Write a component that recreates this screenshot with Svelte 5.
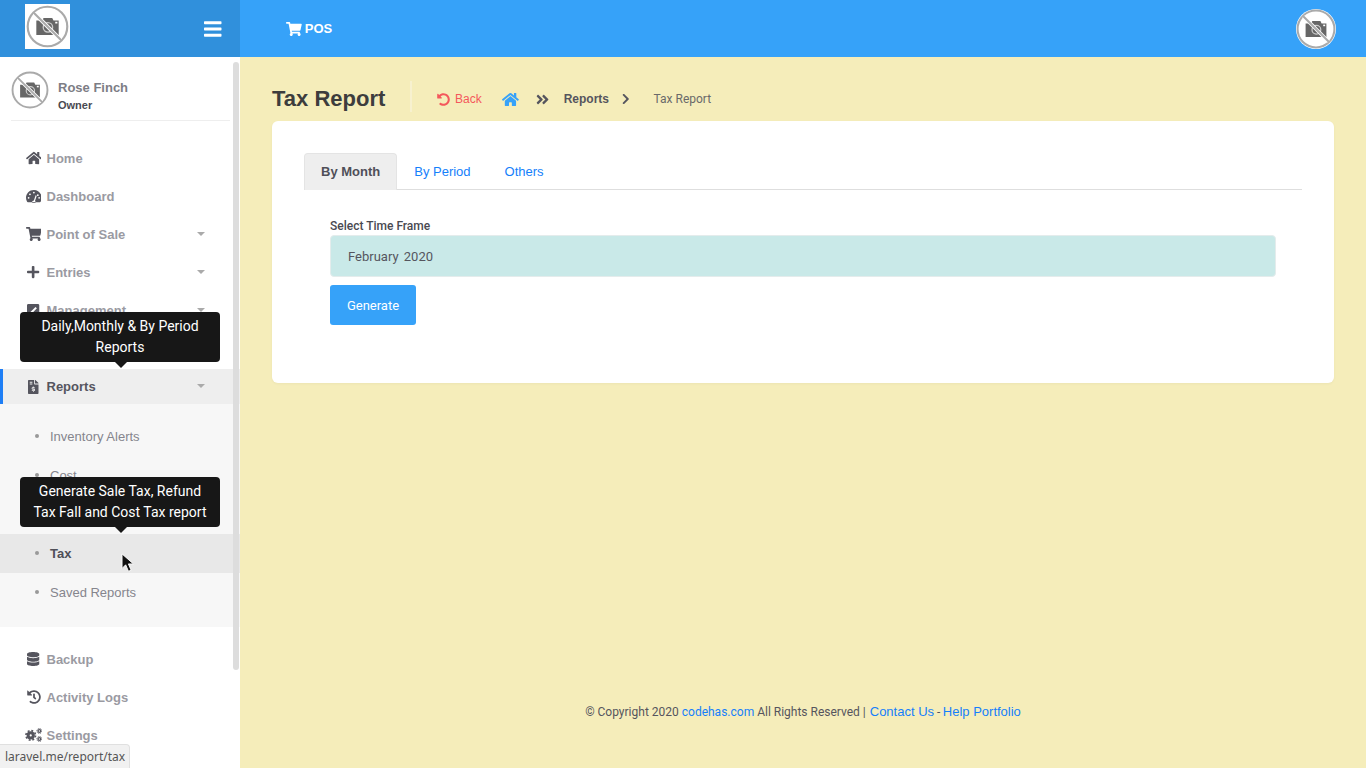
<script>
  const icons = {
    home: ['0 0 576 512', 'M280.37 148.26L96 300.11V464a16 16 0 0 0 16 16l112.06-.29a16 16 0 0 0 15.92-16V368a16 16 0 0 1 16-16h64a16 16 0 0 1 16 16v95.64a16 16 0 0 0 16 16.05L464 480a16 16 0 0 0 16-16V300L295.67 148.26a12.19 12.19 0 0 0-15.3 0zM571.6 251.47L488 182.56V44.05a12 12 0 0 0-12-12h-56a12 12 0 0 0-12 12v72.61L318.47 43a48 48 0 0 0-61 0L4.34 251.47a12 12 0 0 0-1.6 16.9l25.5 31A12 12 0 0 0 45.15 301l235.22-193.74a12.19 12.19 0 0 1 15.3 0L530.9 301a12 12 0 0 0 16.9-1.6l25.5-31a12 12 0 0 0-1.7-16.93z'],
    cart: ['0 0 576 512', 'M528.12 301.319l47.273-208C578.806 78.301 567.391 64 551.99 64H159.208l-9.166-44.81C147.758 8.021 137.93 0 126.529 0H24C10.745 0 0 10.745 0 24v16c0 13.255 10.745 24 24 24h69.883l70.248 343.435C147.325 417.1 136 435.222 136 456c0 30.928 25.072 56 56 56s56-25.072 56-56c0-15.674-6.447-29.835-16.824-40h209.647C430.447 426.165 424 440.326 424 456c0 30.928 25.072 56 56 56s56-25.072 56-56c0-22.172-12.888-41.332-31.579-50.405l5.517-24.276c3.413-15.018-8.002-29.319-23.403-29.319H218.117l-6.545-32h293.145c11.206 0 20.92-7.754 23.403-18.681z'],
    bars: ['0 0 448 512', 'M16 132h416c8.837 0 16-7.163 16-16V76c0-8.837-7.163-16-16-16H16C7.163 60 0 67.163 0 76v40c0 8.837 7.163 16 16 16zm0 160h416c8.837 0 16-7.163 16-16v-40c0-8.837-7.163-16-16-16H16c-8.837 0-16 7.163-16 16v40c0 8.837 7.163 16 16 16zm0 160h416c8.837 0 16-7.163 16-16v-40c0-8.837-7.163-16-16-16H16c-8.837 0-16 7.163-16 16v40c0 8.837 7.163 16 16 16z'],
    plus: ['0 0 448 512', 'M416 208H272V64c0-17.67-14.33-32-32-32h-32c-17.67 0-32 14.33-32 32v144H32c-17.67 0-32 14.33-32 32v32c0 17.67 14.33 32 32 32h144v144c0 17.67 14.33 32 32 32h32c17.67 0 32-14.33 32-32V304h144c17.67 0 32-14.33 32-32v-32c0-17.67-14.33-32-32-32z'],
    chevron: ['0 0 320 512', 'M285.476 272.971L91.132 467.314c-9.373 9.373-24.569 9.373-33.941 0l-22.667-22.667c-9.357-9.357-9.375-24.522-.04-33.901L188.505 256 34.484 101.255c-9.335-9.379-9.317-24.544.04-33.901l22.667-22.667c9.373-9.373 24.569-9.373 33.941 0L285.475 239.03c9.373 9.372 9.373 24.568.001 33.941z'],
    double: ['0 0 448 512', 'M224.3 273l-136 136c-9.4 9.4-24.6 9.4-33.9 0l-22.6-22.6c-9.4-9.4-9.4-24.6 0-33.9l96.4-96.4-96.4-96.4c-9.4-9.4-9.4-24.6 0-33.9L54.3 103c9.4-9.4 24.6-9.4 33.9 0l136 136c9.5 9.4 9.5 24.6.1 34zm192-34l-136-136c-9.4-9.4-24.6-9.4-33.9 0l-22.6 22.6c-9.4 9.4-9.4 24.6 0 33.9l96.4 96.4-96.4 96.4c-9.4 9.4-9.4 24.6 0 33.9l22.6 22.6c9.4 9.4 24.6 9.4 33.9 0l136-136c9.4-9.2 9.4-24.4 0-33.8z'],
    undo: ['0 0 512 512', 'M255.545 8c-66.269.119-126.438 26.233-170.86 68.685L48.971 40.971C33.851 25.851 8 36.559 8 57.941V192c0 13.255 10.745 24 24 24h134.059c21.382 0 32.09-25.851 16.971-40.971l-41.75-41.75c30.864-28.899 70.801-44.907 113.23-45.273 92.398-.798 170.283 73.977 169.484 169.442C423.236 348.009 349.816 424 256 424c-41.127 0-79.997-14.678-110.63-41.556-4.743-4.161-11.906-3.908-16.368.553L89.34 422.659c-4.872 4.872-4.631 12.815.482 17.433C133.798 479.813 192.074 504 256 504c136.966 0 247.999-111.033 248-247.998C504.001 119.193 392.354 7.755 255.545 8z'],
    database: ['0 0 448 512', 'M448 73.143v45.714C448 159.143 347.667 192 224 192S0 159.143 0 118.857V73.143C0 32.857 100.333 0 224 0s224 32.857 224 73.143zM448 176v102.857C448 319.143 347.667 352 224 352S0 319.143 0 278.857V176c48.125 33.143 136.208 48.572 224 48.572S399.874 209.143 448 176zm0 160v102.857C448 479.143 347.667 512 224 512S0 479.143 0 438.857V336c48.125 33.143 136.208 48.572 224 48.572S399.874 369.143 448 336z'],
    history: ['0 0 512 512', 'M504 255.531c.253 136.64-111.18 248.372-247.82 248.468-59.015.042-113.223-20.53-155.822-54.911-11.077-8.94-11.905-25.541-1.839-35.607l11.267-11.267c8.609-8.609 22.353-9.551 31.891-1.984C173.062 425.135 212.781 440 256 440c101.705 0 184-82.311 184-184 0-101.705-82.311-184-184-184-48.814 0-93.149 18.969-126.068 49.932l50.754 50.754c10.08 10.08 2.941 27.314-11.313 27.314H24c-8.837 0-16-7.163-16-16V38.627c0-14.254 17.234-21.393 27.314-11.314l49.372 49.372C129.209 34.136 189.552 8 256 8c136.81 0 247.747 110.78 248 247.531zm-180.912 78.784l9.823-12.63c8.138-10.463 6.253-25.542-4.21-33.679L288 256.349V152c0-13.255-10.745-24-24-24h-16c-13.255 0-24 10.745-24 24v135.651l65.409 50.874c10.463 8.137 25.541 6.253 33.679-4.21z'],
    gauge: ['0 0 576 512', 'M288 32C129 32 0 161 0 320c0 53 14 102 40 145 6 9 16 15 27 15h442c11 0 21-6 27-15 26-43 40-92 40-145C576 161 447 32 288 32zm0 64a32 32 0 1 1 0 64 32 32 0 0 1 0-64zM96 352a32 32 0 1 1 0-64 32 32 0 0 1 0 64zm48-128a32 32 0 1 1 0-64 32 32 0 0 1 0 64zm246 30l-61 184c14 11 23 29 23 48 0 12-3 23-9 32H233c-6-9-9-20-9-32 0-35 29-64 64-64l61-183c3-9 13-14 22-11 9 3 14 13 11 22-1 0-1 3-1 4zm10-30a32 32 0 1 1 64 0 32 32 0 0 1-64 0zm80 128a32 32 0 1 1 0-64 32 32 0 0 1 0 64z'],
    pad: ['0 0 448 512', 'M48 32h352c26 0 48 22 48 48v352c0 26-22 48-48 48H48c-26 0-48-22-48-48V80c0-26 22-48 48-48zm262 110l-186 186-14 66 66-14 186-186-52-52z'],
    money: ['0 0 640 512', 'M608 32H32C14 32 0 46 0 64v384c0 18 14 32 32 32h576c18 0 32-14 32-32V64c0-18-14-32-32-32zM280 160h304v48H280v-48zm0 144h304v48H280v-48zM96 180h96v152H96V180z'],
    invoice: ['0 0 384 512', 'M377 105L279 7c-4.500-4.500-10.600-7-17-7h-6v128h128v-6c0-6.300-2.500-12.400-7-17zM224 136V0H24C10.700 0 0 10.700 0 24v464c0 13.300 10.700 24 24 24h336c13.300 0 24-10.700 24-24V160H248c-13.200 0-24-10.800-24-24zM64 72c0-4.400 3.600-8 8-8h80c4.400 0 8 3.600 8 8v16c0 4.400-3.600 8-8 8H72c-4.400 0-8-3.600-8-8V72zm0 64c0-4.400 3.600-8 8-8h80c4.400 0 8 3.600 8 8v16c0 4.400-3.600 8-8 8H72c-4.400 0-8-3.600-8-8v-16zM176 240h32v28h36v32h-76c-6 0-10 4-10 10s4 10 10 10h48c24 0 42 18 42 42s-18 42-42 42v28h-32v-28h-44v-32h76c6 0 10-4 10-10s-4-10-10-10h-40c-24 0-42-18-42-42s18-42 42-42v-28z']
  };

  const topItems = [
    { label: 'Home', icon: 'home' },
    { label: 'Dashboard', icon: 'gauge' },
    { label: 'Point of Sale', icon: 'cart', caret: true },
    { label: 'Entries', icon: 'plus', caret: true },
    { label: 'Management', icon: 'pad', caret: true },
    { label: 'Finance', icon: 'money', caret: true }
  ];
  const subItems = ['Inventory Alerts', 'Cost', 'Sale', 'Tax', 'Saved Reports'];
  const bottomItems = [
    { label: 'Backup', icon: 'database' },
    { label: 'Activity Logs', icon: 'history' },
    { label: 'Settings', icon: 'cogs' }
  ];
</script>

{#snippet icon(name, cls = '')}
  {#if name === 'cogs'}
    <svg class="ico {cls}" viewBox="0 0 640 512" aria-hidden="true">
      <circle cx="210" cy="270" r="95" fill="none" stroke="currentColor" stroke-width="110" />
      <circle cx="210" cy="270" r="175" fill="none" stroke="currentColor" stroke-width="60" stroke-dasharray="70 67.400" />
      <circle cx="525" cy="110" r="50" fill="none" stroke="currentColor" stroke-width="50" />
      <circle cx="525" cy="110" r="92" fill="none" stroke="currentColor" stroke-width="36" stroke-dasharray="36 36.300" />
      <circle cx="525" cy="402" r="50" fill="none" stroke="currentColor" stroke-width="50" />
      <circle cx="525" cy="402" r="92" fill="none" stroke="currentColor" stroke-width="36" stroke-dasharray="36 36.300" />
    </svg>
  {:else}
    <svg class="ico {cls}" viewBox={icons[name][0]} aria-hidden="true"><path fill="currentColor" fill-rule="evenodd" d={icons[name][1]} /></svg>
  {/if}
{/snippet}

{#snippet noPhoto(cls)}
  <svg class={cls} viewBox="0 0 100 100" aria-hidden="true">
    <circle cx="50" cy="50" r="46" fill="#fff" stroke="#aaa" stroke-width="5" />
    <path fill="#666" d="M24 36h13l4-6h20l3 6h12v34H24z" />
    <circle cx="51" cy="52" r="11" fill="none" stroke="#ccc" stroke-width="3" />
    <rect x="68" y="39" width="5" height="4" fill="#fff" />
    <path d="M19 19l62 62" stroke="#fff" stroke-width="9" />
    <path d="M18 18l64 64" stroke="#aaa" stroke-width="5" />
  </svg>
{/snippet}

{#snippet navRow(item)}
  <a class="nav-link" href="#top">
    <span class="nav-ico">{@render icon(item.icon)}</span>
    <span class="nav-label">{item.label}</span>
    {#if item.caret}<span class="caret"></span>{/if}
  </a>
{/snippet}

<div class="page">
  <header class="topbar">
    <div class="brand">
      <div class="logo">{@render noPhoto('logo-img')}</div>
      <button class="burger" aria-label="Toggle menu">{@render icon('bars')}</button>
    </div>
    <div class="topnav">
      <a class="pos" href="#top">{@render icon('cart')}<span>POS</span></a>
      <div class="top-avatar">{@render noPhoto('avatar-img')}</div>
    </div>
  </header>

  <div class="body">
    <aside class="sidebar">
      <div class="user">
        {@render noPhoto('user-img')}
        <div class="user-text">
          <div class="user-name">Rose Finch</div>
          <div class="user-role">Owner</div>
        </div>
      </div>

      <nav class="nav">
        {#each topItems as item}
          {@render navRow(item)}
        {/each}
        <a class="nav-link active" href="#top">
          <span class="nav-ico">{@render icon('invoice')}</span>
          <span class="nav-label">Reports</span>
          <span class="caret"></span>
        </a>
        <ul class="submenu">
          {#each subItems as sub}
            <li class:current={sub === 'Tax'}><a href="#top">{sub}</a></li>
          {/each}
        </ul>
        {#each bottomItems as item}
          {@render navRow(item)}
        {/each}
      </nav>

      <div class="thumb"></div>
      <div class="tooltip tip-reports">Daily,Monthly &amp; By Period Reports</div>
      <div class="tooltip tip-tax">Generate Sale Tax, Refund Tax Fall and Cost Tax report</div>
      <svg class="cursor" viewBox="0 0 14 22" aria-hidden="true">
        <path d="M1 1v16l4-4 3 7 3-1-3-7h5.500z" fill="#111" stroke="#fff" stroke-width="1" />
      </svg>
    </aside>

    <main class="content">
      <div class="page-head">
        <h1>Tax Report</h1>
        <div class="crumbs">
          <a class="back" href="#top">{@render icon('undo')}<span>Back</span></a>
          <a class="crumb-home" href="#top" aria-label="Home">{@render icon('home')}</a>
          <span class="crumb-sep dbl">{@render icon('double')}</span>
          <a class="crumb-link" href="#top">Reports</a>
          <span class="crumb-sep chev">{@render icon('chevron')}</span>
          <span class="crumb-now">Tax Report</span>
        </div>
      </div>

      <section class="card">
        <div class="tabs">
          <a class="tab selected" href="#top">By Month</a>
          <a class="tab" href="#top">By Period</a>
          <a class="tab" href="#top">Others</a>
        </div>
        <form class="form">
          <label for="frame">Select Time Frame</label>
          <input id="frame" type="text" value="February 2020" readonly />
          <button type="button" class="generate">Generate</button>
        </form>
      </section>

      <footer class="footer">
        <span class="copy">© Copyright 2020 <a href="#top">codehas.com</a> All Rights Reserved |</span>
        <a class="foot-link" href="#top">Contact Us</a>
        <span class="copy dash">-</span>
        <a class="foot-link" href="#top">Help Portfolio</a>
      </footer>
    </main>
  </div>

  <div class="status">laravel.me/report/tax</div>
</div>

<style>
  :global(body) {
    margin: 0;
    overflow: hidden;
    font-family: "Liberation Sans", Arial, sans-serif;
  }

  a {
    text-decoration: none;
  }

  .ico {
    display: block;
    height: 100%;
  }

  .page {
    position: relative;
    display: flex;
    flex-direction: column;
    height: 768px;
    overflow: hidden;
  }

  .topbar {
    display: flex;
    flex: 0 0 57px;
    background: #36a2f9;
    color: #fff;
  }

  .brand {
    display: flex;
    flex: 0 0 240px;
    box-sizing: border-box;
    align-items: center;
    justify-content: space-between;
    padding: 0 19px 0 25px;
    background: #3090dc;
  }

  .logo {
    width: 45px;
    height: 45px;
    margin-top: -4px;
    background: #fff;
  }

  :global(.logo-img) {
    display: block;
    width: 43px;
    height: 43px;
    margin: 1px;
  }

  .burger {
    width: 17px;
    height: 20px;
    padding: 0;
    border: 0;
    background: none;
    color: #fff;
  }

  .topnav {
    display: flex;
    flex: 1;
    align-items: center;
    justify-content: space-between;
    padding: 0 30px 0 46px;
  }

  .pos {
    display: flex;
    align-items: center;
    gap: 3px;
    color: #fff;
    font-size: 13px;
    font-weight: 700;
  }

  .pos :global(.ico) {
    height: 14px;
  }

  .top-avatar {
    width: 40px;
    height: 40px;
    margin-top: 1px;
    border-radius: 50%;
    background: #fff;
  }

  :global(.avatar-img) {
    display: block;
    width: 40px;
    height: 40px;
  }

  .body {
    display: flex;
    flex: 1;
    min-height: 0;
  }

  .sidebar {
    position: relative;
    flex: 0 0 240px;
    background: #fff;
    overflow: hidden;
  }

  .user {
    display: flex;
    align-items: center;
    gap: 9px;
    height: 64px;
    margin: 0 10px 0 11px;
    padding-top: 3px;
    box-sizing: border-box;
    border-bottom: 1px solid #eee;
  }

  :global(.user-img) {
    display: block;
    flex: 0 0 38px;
    width: 38px;
    height: 38px;
  }

  .user-text {
    padding-top: 12px;
  }

  .user-name {
    color: #7d7d85;
    font-size: 13px;
    font-weight: 700;
    line-height: 16px;
  }

  .user-role {
    margin-top: 2px;
    color: #4a4a52;
    font-size: 11px;
    font-weight: 700;
    line-height: 14px;
  }

  .nav {
    padding-top: 18px;
  }

  .nav-link {
    display: flex;
    align-items: center;
    height: 38px;
    padding-left: 25px;
    padding-right: 35px;
    color: #9a9aa2;
    font-size: 13px;
    font-weight: 700;
  }

  .nav-ico {
    display: flex;
    flex: 0 0 17px;
    min-width: 0;
    justify-content: center;
    height: 14px;
    margin-right: 4.5px;
    color: #55555e;
  }

  .nav-ico :global(.ico) {
    flex: none;
  }

  .nav-label {
    flex: 1;
  }

  .caret {
    width: 0;
    height: 0;
    border-top: 4px solid #aaa;
    border-left: 4px solid transparent;
    border-right: 4px solid transparent;
    margin-top: -1px;
  }

  .active {
    height: 35px;
    margin-top: 2px;
    padding-left: 22px;
    border-left: 3px solid #1e7ef5;
    background: #eee;
    color: #55555e;
  }

  .submenu {
    margin: 0;
    padding: 13px 0 15px;
    list-style: none;
    background: #f7f7f7;
  }

  .submenu li {
    position: relative;
    height: 39px;
    line-height: 37px;
    padding-left: 50px;
  }

  .submenu li::before {
    content: "";
    position: absolute;
    left: 35px;
    top: 17px;
    width: 4px;
    height: 4px;
    border-radius: 50%;
    background: #999;
  }

  .submenu a {
    color: #85858d;
    font-size: 13px;
  }

  .current {
    background: #e8e8e8;
  }

  .current a {
    color: #4f4f58;
    font-weight: 700;
  }

  .submenu + .nav-link {
    margin-top: 13px;
  }

  .thumb {
    position: absolute;
    top: 5px;
    left: 233px;
    width: 6px;
    height: 608px;
    border-radius: 3px;
    background: #ddd;
  }

  .tooltip {
    position: absolute;
    left: 20px;
    width: 200px;
    height: 50px;
    box-sizing: border-box;
    padding: 4px 8px;
    border-radius: 4px;
    background: #171717;
    color: #fff;
    font-family: Roboto, sans-serif;
    font-size: 14px;
    line-height: 21px;
    text-align: center;
  }

  .tooltip::after {
    content: "";
    position: absolute;
    left: 95px;
    bottom: -6px;
    border-top: 6px solid #171717;
    border-left: 6px solid transparent;
    border-right: 6px solid transparent;
  }

  .tip-reports {
    top: 255px;
  }

  .tip-tax {
    top: 420px;
  }

  .cursor {
    position: absolute;
    left: 121px;
    top: 496px;
    width: 13px;
    height: 20px;
  }

  .content {
    display: flex;
    flex: 1;
    flex-direction: column;
    min-width: 0;
    padding: 0 32px;
    background: #f5edba;
  }

  .page-head {
    display: flex;
    align-items: center;
    height: 64px;
    box-sizing: border-box;
    padding-top: 18px;
  }

  h1 {
    width: 138px;
    height: 31px;
    margin: 0 0 3px;
    border-right: 2px solid #f7f1cf;
    color: #3d3d3d;
    font-size: 22px;
    font-weight: 700;
    line-height: 36px;
  }

  .crumbs {
    display: flex;
    align-items: center;
    margin-top: 2px;
    margin-left: 25px;
    font-size: 12px;
  }

  .back {
    display: flex;
    align-items: center;
    gap: 5px;
    color: #f4585c;
  }

  .back :global(.ico) {
    height: 13px;
  }

  .crumb-home {
    height: 15px;
    margin-left: 20px;
    color: #36a2f9;
  }

  .crumb-sep {
    color: #55555e;
    height: 15px;
  }

  .dbl {
    margin-left: 17px;
  }

  .crumb-link {
    margin-left: 15px;
    color: #55555e;
    font-weight: 700;
  }

  .chev {
    height: 12px;
    margin-left: 13px;
  }

  .crumb-now {
    margin-left: 24px;
    color: #6a6a6a;
    font-family: Roboto, sans-serif;
  }

  .card {
    height: 262px;
    box-sizing: border-box;
    padding: 32px;
    border-radius: 6px;
    background: #fff;
    box-shadow: 0 1px 3px rgba(0, 0, 0, 0.04);
  }

  .tabs {
    display: flex;
    height: 37px;
    box-sizing: border-box;
    border-bottom: 1px solid #dedede;
    font-size: 13px;
  }

  .tab {
    height: 37px;
    box-sizing: border-box;
    padding: 0 17px;
    line-height: 37px;
    color: #157ffb;
  }

  .selected {
    border: 1px solid #e4e4e4;
    border-bottom: 0;
    border-radius: 4px 4px 0 0;
    padding: 0 16px;
    background: #eee;
    color: #4f4f58;
    font-weight: 700;
    line-height: 35px;
  }

  .form {
    display: flex;
    flex-direction: column;
    align-items: flex-start;
    padding: 28px 26px 0;
  }

  label {
    color: #4a4a52;
    font-family: Roboto, sans-serif;
    font-size: 12px;
    font-weight: 500;
    line-height: 16px;
    margin-bottom: 1px;
  }

  input {
    width: 100%;
    height: 42px;
    box-sizing: border-box;
    padding: 0 17px;
    border: 1px solid #e4ecec;
    border-radius: 4px;
    outline: 0;
    background: #c9e9e8;
    color: #55555e;
    font-family: Roboto, sans-serif;
    font-size: 13px;
    word-spacing: 2px;
  }

  .generate {
    width: 86px;
    height: 40px;
    margin-top: 8px;
    padding: 0;
    border: 0;
    border-radius: 3px;
    background: #36a2f9;
    color: #fff;
    font-family: Roboto, sans-serif;
    font-size: 13px;
  }

  .footer {
    margin-top: auto;
    padding-bottom: 48px;
    text-align: center;
    line-height: 15px;
  }

  .copy {
    color: #55555e;
    font-family: Roboto, sans-serif;
    font-size: 12px;
  }

  .dash {
    margin: 0 -1.5px;
  }

  .copy a,
  .foot-link {
    color: #157ffb;
  }

  .foot-link {
    margin-left: -0.5px;
    font-size: 13px;
  }

  .status {
    position: absolute;
    left: 0;
    bottom: 0;
    height: 23px;
    padding: 0 4px 0 5px;
    border: 1px solid #e0e0e0;
    border-width: 1px 1px 0 0;
    border-radius: 0 4px 0 0;
    background: #f1f1f1;
    color: #555;
    font-family: "Noto Sans", sans-serif;
    font-size: 12px;
    line-height: 23px;
  }
</style>
